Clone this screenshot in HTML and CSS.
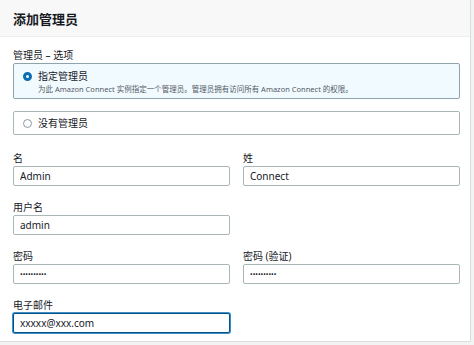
FILE: index.html
```html
<!DOCTYPE html>
<html lang="zh-CN">
<head>
    <meta charset="UTF-8">
    <title>添加管理员</title>
    <link rel="stylesheet" href="styles.css">
</head>
<body>
    <div class="panel">
        <div class="panel-header">
            <h2>添加管理员</h2>
        </div>
        <div class="panel-body">
            <div class="group-label">管理员 – 选项</div>
            <div class="tile selected">
                <span class="radio on"></span>
                <div class="tile-text">
                    <div class="tile-title">指定管理员</div>
                    <div class="tile-desc">为此 Amazon Connect 实例指定一个管理员。管理员拥有访问所有 Amazon Connect 的权限。</div>
                </div>
            </div>
            <div class="tile">
                <span class="radio"></span>
                <div class="tile-text">
                    <div class="tile-title">没有管理员</div>
                </div>
            </div>

            <div class="fields">
                <div class="field">
                    <label>名</label>
                    <input class="input" type="text" value="Admin">
                </div>
                <div class="field">
                    <label>姓</label>
                    <input class="input" type="text" value="Connect">
                </div>
                <div class="field">
                    <label>用户名</label>
                    <input class="input" type="text" value="admin">
                </div>
                <div class="field empty"></div>
                <div class="field">
                    <label>密码</label>
                    <input class="input" type="password" value="1234567890">
                </div>
                <div class="field">
                    <label>密码 (验证)</label>
                    <input class="input" type="password" value="1234567890">
                </div>
                <div class="field">
                    <label>电子邮件</label>
                    <input class="input focused" type="text" value="xxxxx@xxx.com">
                </div>
            </div>
        </div>
    </div>
</body>
</html>
```

FILE: styles.css
```css
body {
    margin: 0;
    padding: 0;
    font-family: "Noto Sans", "Noto Sans CJK SC", sans-serif;
    background: #f2f3f3;
    color: #16191f;
    width: 474px;
    height: 345px;
    overflow: hidden;
}

.panel {
    width: 470px;
    height: 341px;
    background: #ffffff;
    border-right: 1px solid #dcdcdc;
    border-bottom: 1px solid #dcdcdc;
}

.panel-header {
    height: 37px;
    background: #f8f8f8;
    border-bottom: 1px solid #eeeeee;
    box-sizing: border-box;
    display: flex;
    align-items: center;
    padding-left: 13px;
}

.panel-header h2 {
    margin: 0;
    font-size: 13px;
    font-weight: 700;
}

.panel-body {
    padding: 11px 10px 0 13px;
    width: 447px;
}

.group-label {
    font-size: 10px;
    line-height: 14px;
    margin-bottom: 1px;
}

.tile {
    display: flex;
    align-items: center;
    height: 24px;
    border: 1px solid #aab7b8;
    border-radius: 2px;
    box-sizing: border-box;
    padding-left: 9px;
    margin-bottom: 12px;
}

.tile.selected {
    height: 36px;
    background: #f1faff;
    border-color: #8fa3ad;
    align-items: flex-start;
    padding-top: 5px;
}

.radio {
    width: 9px;
    height: 9px;
    border: 1px solid #8b9aa3;
    border-radius: 50%;
    box-sizing: border-box;
    margin-right: 6px;
    flex-shrink: 0;
}

.tile.selected .radio {
    margin-top: 3px;
}

.radio.on {
    border: 3px solid #0a6eb4;
}

.tile-title {
    font-size: 10px;
    line-height: 14px;
}

.tile-desc {
    font-size: 7.5px;
    line-height: 12px;
    color: #545b64;
}

.fields {
    display: grid;
    grid-template-columns: 217px 217px;
    column-gap: 13px;
    row-gap: 14px;
    margin-top: 16px;
}

.field label {
    display: block;
    font-size: 10px;
    line-height: 14px;
    margin-bottom: 1px;
}

.input {
    display: block;
    width: 100%;
    height: 20px;
    box-sizing: border-box;
    border: 1px solid #aab7b8;
    border-radius: 2px;
    padding: 0 6px;
    font-family: "Noto Sans", "Noto Sans CJK SC", sans-serif;
    font-size: 10px;
    color: #16191f;
    background: #ffffff;
    outline: none;
}

.input[type="password"] {
    font-size: 7px;
    letter-spacing: 0;
}

.input.focused {
    border: 1px solid #00538a;
    box-shadow: 0 0 0 1px #3f8fc4;
}
```
